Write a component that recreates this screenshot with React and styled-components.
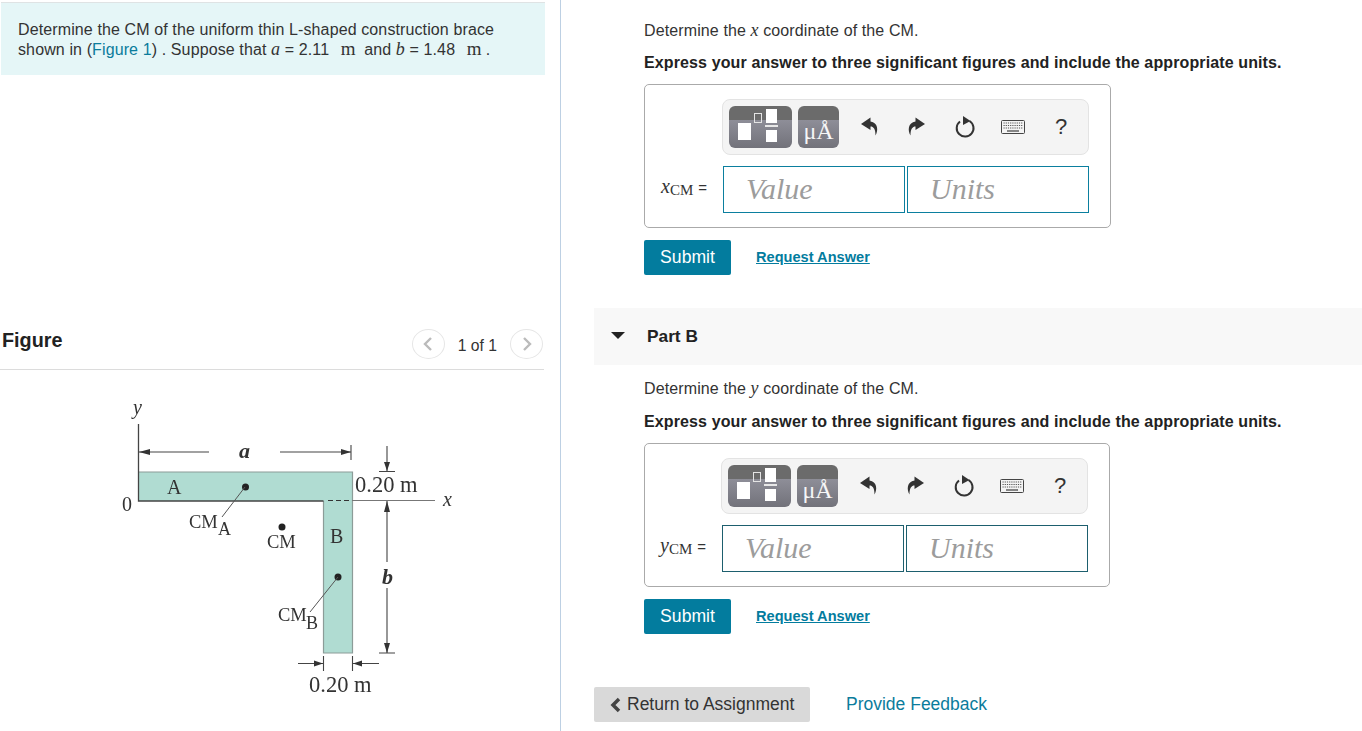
import React from 'react';
import styled, { createGlobalStyle } from 'styled-components';

const GlobalStyle = createGlobalStyle`
    html, body {
        margin: 0;
        padding: 0;
        background: #fff;
        font-family: "Liberation Sans", Arial, sans-serif;
        color: #333;
    }
`;

const Page = styled.div`
    display: grid;
    grid-template-columns: 561px 1fr;
    height: 731px;
    overflow: hidden;
`;

const LeftColumn = styled.div`
    padding-top: 2px;
    border-right: 1px solid #bdd0e3;
    box-sizing: border-box;
`;

const ProblemBox = styled.div`
    width: 544px;
    height: 73px;
    margin-left: 1px;
    padding: 17px 17px 0;
    box-sizing: border-box;
    background: #e5f6f7;
    border-top: 1px solid #dfe3e4;
    font-size: 16px;
    letter-spacing: 0.115px;
    line-height: 20px;
    color: #333;
`;

const Link = styled.span`
    color: #0b7c9c;
`;

const Mi = styled.span`
    font-family: "Liberation Serif", serif;
    font-style: italic;
    font-size: ${(p) => p.$size || 18}px;
    line-height: 0;
`;

const Unit = styled.span`
    font-family: "Liberation Serif", serif;
    font-size: 19px;
    line-height: 0;
    margin: 0 4px 0 7px;
`;

const FigureHeader = styled.div`
    display: flex;
    align-items: center;
    width: 544px;
    height: 46px;
    margin-top: 249px;
    padding: 0 1px 6px 2px;
    box-sizing: border-box;
    border-bottom: 1px solid #dcdcdc;
`;

const FigureTitle = styled.h2`
    margin: 0 auto 8px 0;
    font-size: 19.8px;
    line-height: 30px;
    font-weight: bold;
    color: #222;
`;

const Pager = styled.button`
    width: 33px;
    height: 30px;
    padding: 0;
    display: flex;
    align-items: center;
    justify-content: center;
    background: #fff;
    border: 1px solid #e6e6e6;
    border-radius: 50%;
`;

const PagerText = styled.span`
    margin: 4px 13px 0 13px;
    font-size: 15.7px;
    color: #333;
`;

const DiagramWrap = styled.div`
    margin: 20px 0 0 100px;
`;

const RightColumn = styled.div`
    padding-left: 33px;
`;

const PartBody = styled.div`
    padding-left: 50px;
`;

const Line = styled.p`
    margin: ${(p) => p.$top}px 0 0;
    font-size: 16px;
    letter-spacing: ${(p) => (p.$bold ? 0.12 : 0.115)}px;
    line-height: 20px;
    font-weight: ${(p) => (p.$bold ? 'bold' : 'normal')};
    color: ${(p) => (p.$bold ? '#222' : '#333')};
`;

const AnswerBox = styled.div`
    width: ${(p) => p.$width}px;
    height: 144px;
    margin-top: 11px;
    padding: 14px 21px 0 ${(p) => p.$inset}px;
    box-sizing: border-box;
    border: 1px solid #aaa;
    border-radius: 5px;
`;

const Toolbar = styled.div`
    display: flex;
    align-items: center;
    height: 56px;
    padding-left: 6px;
    box-sizing: border-box;
    background: #f4f4f4;
    border: 1px solid #e3e3e3;
    border-radius: 8px;
`;

const ToolButton = styled.div`
    display: flex;
    align-items: flex-end;
    justify-content: center;
    flex: none;
    width: ${(p) => p.$width}px;
    height: 42px;
    margin-right: 6px;
    border-radius: 6px;
    background: linear-gradient(#6b6b6b 0, #6b6b6b 14px, #8e8e98 14px, #72727a 100%);
`;

const UnitGlyph = styled.span`
    font-family: "Liberation Serif", serif;
    font-size: 24px;
    line-height: 28px;
    padding-bottom: 3px;
    color: #f6f6f6;
`;

const IconSlot = styled.div`
    display: flex;
    justify-content: center;
    flex: none;
    width: 48px;
    font-size: 22px;
    color: #333;
`;

const InputRow = styled.div`
    display: flex;
    gap: 2px;
    margin-top: 11px;
    margin-left: ${(p) => p.$shift}px;
    position: relative;
`;

const VarLabel = styled.div`
    position: absolute;
    right: 100%;
    top: 13px;
    margin-right: 16px;
    white-space: nowrap;
    font-size: 15px;
    color: #333;
`;

const Sub = styled.span`
    font-family: "Liberation Serif", serif;
    font-size: 15px;
    position: relative;
    top: 2px;
    margin-right: 5px;
`;

const Field = styled.div`
    width: 182px;
    height: 47px;
    padding-left: 22px;
    box-sizing: border-box;
    border: 1px solid ${(p) => p.$edge};
    font-family: "Liberation Serif", serif;
    font-style: italic;
    font-size: 30px;
    line-height: 43px;
    color: #9c9c9c;
`;

const Actions = styled.div`
    display: flex;
    align-items: center;
    margin-top: 12px;
`;

const SubmitButton = styled.button`
    width: 87px;
    height: 35px;
    padding: 0 0 1px;
    background: #037c9e;
    border: none;
    border-radius: 2px;
    font-family: inherit;
    font-size: 17.6px;
    color: #fff;
`;

const RequestLink = styled.a`
    margin: 0 0 2px 25px;
    font-size: 14.6px;
    font-weight: bold;
    text-decoration: underline;
    color: #037c9e;
`;

const PartBar = styled.div`
    display: flex;
    align-items: center;
    height: 57px;
    margin-top: 33px;
    padding: 0 0 1px 17px;
    box-sizing: border-box;
    background: #f8f8f8;
`;

const PartTitle = styled.h3`
    margin: 0 0 0 22px;
    font-size: 17.3px;
    font-weight: bold;
    color: #222;
`;

const Caret = styled.span`
    width: 0;
    height: 0;
    margin-top: -2px;
    border-left: 7px solid transparent;
    border-right: 7px solid transparent;
    border-top: 7px solid #222;
`;

const Footer = styled.div`
    display: flex;
    align-items: center;
    margin-top: 53px;
`;

const ReturnButton = styled.button`
    display: flex;
    align-items: center;
    gap: 3px;
    width: 216px;
    height: 35px;
    padding: 0 0 0 14px;
    box-sizing: border-box;
    background: #d9d9d9;
    border: none;
    border-radius: 2px;
    font-family: inherit;
    font-size: 17.5px;
    color: #333;
`;

const FeedbackLink = styled.a`
    margin-left: 36px;
    font-size: 17.5px;
    color: #0b7c9c;
`;

const Chevron = ({ dir, color = '#bbb', width = 2.4, size = 16 }) => (
    <svg width={size} height={size} viewBox="0 0 16 16" fill="none">
        <path d={dir === 'left' ? 'M11 2 L5 8 L11 14' : 'M5 2 L11 8 L5 14'} stroke={color} strokeWidth={width} />
    </svg>
);

const TemplateIcon = () => (
    <svg width="63" height="42" viewBox="0 0 63 42" fill="none">
        <rect x="9" y="17" width="13" height="17" fill="#fff" />
        <rect x="25.5" y="7.5" width="7" height="9" stroke="#e4e4e4" />
        <rect x="37" y="3" width="11" height="14" fill="#fff" />
        <rect x="36" y="19" width="13" height="2" fill="#e8e8e8" />
        <rect x="37" y="24" width="11" height="12" fill="#fff" />
    </svg>
);

const UndoIcon = ({ flip }) => (
    <svg width="20" height="20" viewBox="0 0 20 20" style={flip ? { transform: 'scaleX(-1)' } : undefined}>
        <path d="M11.5 0.5 L2 7 L11.5 13 V9.5 C14.5 9.5 16.5 12 16.5 18.5 C19.5 13.5 19 5.5 11.5 4.5 Z" fill="#333" />
    </svg>
);

const ResetIcon = () => (
    <svg width="22" height="24" viewBox="0 0 22 24" fill="none">
        <path d="M6 6.5 A8.4 8.4 0 1 0 15.5 6" stroke="#333" strokeWidth="2" />
        <path d="M9 1 L16.5 6 L9 10 Z" fill="#333" />
    </svg>
);

const KeyboardIcon = () => (
    <svg width="24" height="14" viewBox="0 0 24 14" fill="none">
        <rect x="0.5" y="0.5" width="23" height="13" rx="1" fill="#f4f4f4" stroke="#444" />
        <path d="M2.5 3 H21.5 M2.5 5.5 H21.5 M2.5 8 H21.5" stroke="#555" strokeWidth="1.2" strokeDasharray="1.2 1" />
        <path d="M6 11 H18" stroke="#555" strokeWidth="1.4" />
    </svg>
);

const Arrow = ({ points }) => <polygon points={points} fill="#333" />;

const Label = styled.text`
    font-family: "Liberation Serif", serif;
    font-size: ${(p) => p.$size || 20}px;
    font-style: ${(p) => (p.$italic ? 'italic' : 'normal')};
    font-weight: ${(p) => (p.$heavy ? 'bold' : 'normal')};
    fill: #333;
`;

// the drawing is in page coordinates, so the viewBox starts where the wrap sits
const BraceDiagram = () => (
    <svg width="370" height="320" viewBox="100 390 370 320" fill="none" style={{ display: 'block', filter: 'blur(0.35px)' }}>
        <path d="M138.5 472 H352.5 V653 H323.5 V501 H138.5 Z" fill="#b0dcd2" />
        <path d="M138.5 472 H352.5 V653 H323.5 V501" stroke="#8c9c98" strokeWidth="1.2" />
        <path d="M138.5 424 V501 H323.5" stroke="#444" strokeWidth="1.3" />
        <path d="M328 500.5 H350" stroke="#333" strokeWidth="1.2" strokeDasharray="5 3" />
        <path d="M352 500.5 H435" stroke="#777" strokeWidth="1.2" />

        <path d="M139 452 H209 M280 452 H351 M351 445 V460" stroke="#444" strokeWidth="1.1" />
        <Arrow points="139,452 150,449 150,455" />
        <Arrow points="351,452 341,449 341,455" />

        <path d="M387 446 V472 M379 471.5 H395 M387 501 V562 M387 588 V653 M379 653 H395" stroke="#444" strokeWidth="1.1" />
        <Arrow points="387,471 384,462 390,462" />
        <Arrow points="387,501 384,512 390,512" />
        <Arrow points="387,653 384,643 390,643" />

        <path d="M298 663.5 H323 M323.5 656 V671 M352.5 656 V671 M353 663.5 H379" stroke="#444" strokeWidth="1.1" />
        <Arrow points="323,663.5 314,660.5 314,666.5" />
        <Arrow points="353,663.5 362,660.5 362,666.5" />

        <circle cx="245.5" cy="487" r="3.5" fill="#222" />
        <path d="M245 487 L222 517" stroke="#555" strokeWidth="1" />
        <circle cx="282" cy="527" r="3.5" fill="#222" />
        <circle cx="338" cy="577" r="3.5" fill="#222" />
        <path d="M338 577 L310 612" stroke="#555" strokeWidth="1" />

        <Label x="133" y="414" $italic>y</Label>
        <Label x="239" y="458" $size={22} $italic $heavy>a</Label>
        <Label x="382" y="584" $size={22} $italic $heavy>b</Label>
        <Label x="443" y="506" $italic>x</Label>
        <Label x="122" y="511">0</Label>
        <Label x="167" y="494">A</Label>
        <Label x="330" y="543">B</Label>
        <Label x="355" y="492" $size={22.5}>0.20 m</Label>
        <Label x="309" y="692" $size={22.5}>0.20 m</Label>
        <Label x="189" y="528" $size={18.5}>CM</Label>
        <Label x="218" y="535" $size={18}>A</Label>
        <Label x="267" y="548" $size={18.5}>CM</Label>
        <Label x="278" y="621" $size={18.5}>CM</Label>
        <Label x="306" y="629" $size={18}>B</Label>
    </svg>
);

const AnswerPanel = ({ name, width, inset, shift, edge }) => (
    <>
        <AnswerBox $width={width} $inset={inset}>
            <Toolbar>
                <ToolButton $width={63}><TemplateIcon /></ToolButton>
                <ToolButton $width={41}><UnitGlyph>μÅ</UnitGlyph></ToolButton>
                <IconSlot><UndoIcon /></IconSlot>
                <IconSlot><UndoIcon flip /></IconSlot>
                <IconSlot><ResetIcon /></IconSlot>
                <IconSlot><KeyboardIcon /></IconSlot>
                <IconSlot>?</IconSlot>
            </Toolbar>
            <InputRow $shift={shift}>
                <VarLabel><Mi $size={20}>{name}</Mi><Sub>CM</Sub>=</VarLabel>
                <Field $edge={edge}>Value</Field>
                <Field $edge={edge}>Units</Field>
            </InputRow>
        </AnswerBox>
        <Actions>
            <SubmitButton>Submit</SubmitButton>
            <RequestLink>Request Answer</RequestLink>
        </Actions>
    </>
);

const App = () => {
    return (
        <Page>
            <GlobalStyle />
            <LeftColumn>
                <ProblemBox>
                    Determine the CM of the uniform thin L-shaped construction brace
                    <br />
                    shown in (<Link>Figure 1</Link>) . Suppose that <Mi>a</Mi> = 2.11 <Unit>m</Unit> and <Mi>b</Mi> = 1.48 <Unit>m</Unit>.
                </ProblemBox>
                <FigureHeader>
                    <FigureTitle>Figure</FigureTitle>
                    <Pager><Chevron dir="left" /></Pager>
                    <PagerText>1 of 1</PagerText>
                    <Pager><Chevron dir="right" /></Pager>
                </FigureHeader>
                <DiagramWrap>
                    <BraceDiagram />
                </DiagramWrap>
            </LeftColumn>
            <RightColumn>
                <PartBody>
                    <Line $top={21}>Determine the <Mi>x</Mi> coordinate of the CM.</Line>
                    <Line $top={12} $bold>Express your answer to three significant figures and include the appropriate units.</Line>
                    <AnswerPanel name="x" width={467} inset={77} shift={1} edge="#0b7f9f" />
                </PartBody>
                <PartBar>
                    <Caret />
                    <PartTitle>Part B</PartTitle>
                </PartBar>
                <PartBody>
                    <Line $top={14}>Determine the <Mi>y</Mi> coordinate of the CM.</Line>
                    <Line $top={13} $bold>Express your answer to three significant figures and include the appropriate units.</Line>
                    <AnswerPanel name="y" width={466} inset={76} shift={1} edge="#1d5f6e" />
                </PartBody>
                <Footer>
                    <ReturnButton>
                        <Chevron dir="left" color="#444" width={3.5} size={16} />
                        Return to Assignment
                    </ReturnButton>
                    <FeedbackLink>Provide Feedback</FeedbackLink>
                </Footer>
            </RightColumn>
        </Page>
    );
};

export default App;
